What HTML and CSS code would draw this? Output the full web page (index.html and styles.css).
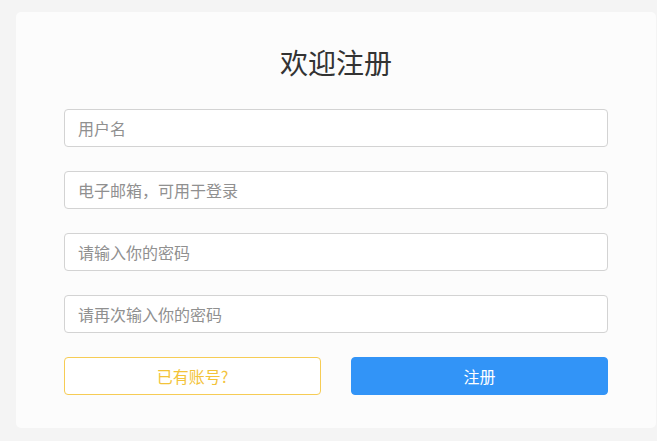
FILE: index.html
```html
<!DOCTYPE html>
<html lang="zh-CN">
<head>
<meta charset="utf-8">
<title>欢迎注册</title>
<link rel="stylesheet" href="styles.css">
</head>
<body>
<div class="card">
  <h1 class="title">欢迎注册</h1>
  <form class="form">
    <input class="field" type="text" placeholder="用户名">
    <input class="field" type="text" placeholder="电子邮箱，可用于登录">
    <input class="field" type="password" placeholder="请输入你的密码">
    <input class="field" type="password" placeholder="请再次输入你的密码">
    <div class="actions">
      <button type="button" class="btn btn-ghost">已有账号?</button>
      <button type="button" class="btn btn-primary">注册</button>
    </div>
  </form>
</div>
</body>
</html>
```
FILE: styles.css
```css
html, body {
  margin: 0;
  padding: 0;
  background: #f4f4f4;
  font-family: "Noto Sans CJK SC", "Noto Sans", sans-serif;
}
body {
  padding: 12px 0 0 16px;
}
.card {
  width: 640px;
  height: 416px;
  box-sizing: border-box;
  background: #fcfcfc;
  border-radius: 5px;
  padding: 31px 48px 0;
}
.title {
  margin: 0;
  text-align: center;
  font-size: 28px;
  font-weight: 400;
  line-height: 38px;
  color: #333;
}
.form {
  margin-top: 28px;
  display: flex;
  flex-direction: column;
  gap: 24px;
}
.field {
  display: block;
  width: 544px;
  height: 38px;
  box-sizing: border-box;
  border: 1px solid #d3d3d3;
  border-radius: 4px;
  background: #fff;
  padding: 0 13px;
  font-family: inherit;
  font-size: 16px;
  outline: none;
}
.field::placeholder {
  color: #909090;
}
.actions {
  display: flex;
  gap: 30px;
}
.btn {
  flex: 1;
  height: 38px;
  border-radius: 4px;
  font-family: inherit;
  font-size: 16px;
  cursor: pointer;
  box-sizing: border-box;
}
.btn-ghost {
  background: #fff;
  border: 1px solid #f6cc55;
  color: #f3c33a;
}
.btn-primary {
  background: #3294f7;
  border: 1px solid #3294f7;
  color: #fff;
}
```
